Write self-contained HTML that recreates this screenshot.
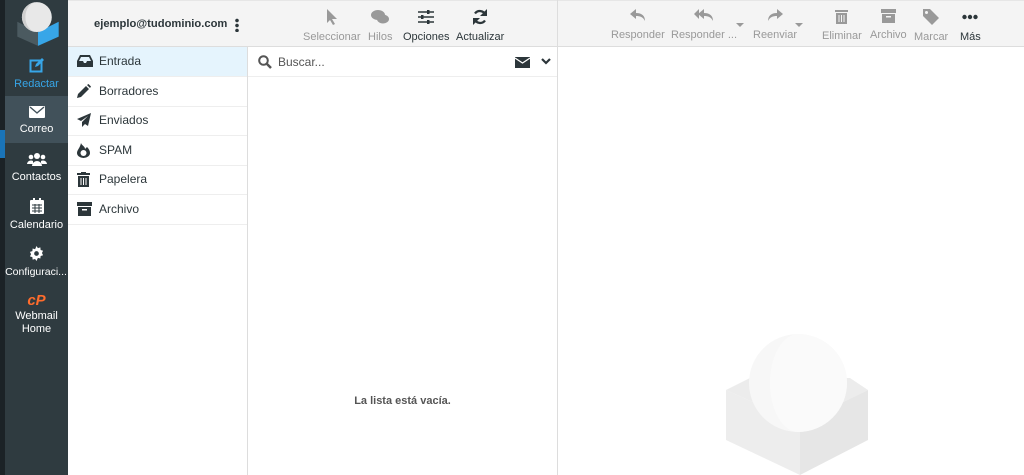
<!DOCTYPE html><html><head><meta charset="utf-8"><style>
*{box-sizing:border-box;margin:0;padding:0}
body{width:1024px;height:475px;overflow:hidden;font-family:"Liberation Sans",sans-serif;background:#fff;position:relative;color:#2c363a}
.abs{position:absolute}
#edge{left:0;top:0;width:5px;height:475px;background:#1b2226}
#side{left:5px;top:0;width:63px;height:475px;background:#2f3b40}
.nav{position:absolute;left:0;width:63px;text-align:center;color:#fff;font-size:11px}
.nav svg{display:block;margin:0 auto 5px}
#fold{left:68px;top:0;width:180px;height:475px;border-right:1px solid #ddd}
.hdr{position:absolute;top:0;height:47px;background:#f4f4f4;border-bottom:1px solid #ddd;border-top:1px solid #e6e6e6}
.frow{position:absolute;left:0;width:179px;height:30px;border-bottom:1px solid #eee;font-size:12px;line-height:29px;padding-left:31px;color:#2c363a}
.frow svg{position:absolute;left:9px;top:7px}
.tb{position:absolute;top:8px;text-align:center;font-size:11px;color:#999}
.tb svg{display:block;margin:0 auto 6px}
.dk{color:#2c363a}
</style></head><body>
<div class="abs" id="edge"></div><div class="abs" style="left:0;top:130px;width:5px;height:28px;background:#1a74b8"></div>
<div class="abs" id="side">
<svg class="abs" style="left:10px;top:2px" width="46" height="44" viewBox="0 0 40 38"><polygon points="2,17 20,26 20,38 2,30" fill="#4b5a60"/><polygon points="20,26 38,17 38,30 20,38" fill="#37a6e8"/><circle cx="19" cy="13" r="13" fill="#e8e8e8"/><path d="M19 0a13 13 0 0 0 0 26a10 13 0 0 1 0-26z" fill="#cfcfcf"/></svg>
<div class="nav" style="top:57px;color:#37a6e8"><svg width="16" height="16" viewBox="0 0 16 16"><rect x="1.5" y="3.5" width="11" height="11" fill="none" stroke="#37a6e8" stroke-width="2"/><path d="M6 10l1-3 6-6 2 2-6 6z" fill="#37a6e8"/></svg>Redactar</div>
<div class="abs" style="left:0;top:96px;width:63px;height:47px;background:#41515a"></div>
<div class="nav" style="top:106px"><svg width="16" height="12" viewBox="0 0 16 12"><rect x="0" y="0" width="16" height="12" rx="1" fill="#fff"/><path d="M1 1l7 6 7-6" fill="none" stroke="#41515a" stroke-width="1.4"/></svg>Correo</div>
<div class="nav" style="top:152px"><svg width="20" height="14" viewBox="0 0 20 14"><circle cx="10" cy="4" r="3" fill="#fff"/><circle cx="4" cy="5" r="2.3" fill="#fff"/><circle cx="16" cy="5" r="2.3" fill="#fff"/><path d="M5 14a5 5 0 0 1 10 0z M0 12a4 4 0 0 1 6-3v3z M20 12a4 4 0 0 0-6-3v3z" fill="#fff"/></svg>Contactos</div>
<div class="nav" style="top:198px"><svg width="14" height="16" viewBox="0 0 14 16"><rect x="0" y="2" width="14" height="14" rx="1" fill="#fff"/><rect x="3" y="0" width="2" height="4" fill="#fff"/><rect x="9" y="0" width="2" height="4" fill="#fff"/><path d="M2 7h10M2 10h10M2 13h10M5 6v9M9 6v9" stroke="#2f3b40" stroke-width="1"/></svg>Calendario</div>
<div class="nav" style="top:246px;font-size:10.5px;white-space:nowrap;margin-left:-3px;width:68px"><svg width="15" height="15" viewBox="0 0 16 16"><path d="M8 0l1.5 2.2 2.6-.7.3 2.7 2.6.8-1.2 2.4 1.2 2.4-2.6.8-.3 2.7-2.6-.7L8 16l-1.5-2.2-2.6.7-.3-2.7-2.6-.8L2.2 8.6 1 6.2l2.6-.8.3-2.7 2.6.7z" fill="#fff"/><circle cx="8" cy="8" r="2.5" fill="#2f3b40"/></svg>Configuraci...</div>
<div class="nav" style="top:292px;line-height:13px"><div style="color:#ff6c2c;font-weight:bold;font-style:italic;font-size:15px;line-height:18px">cP</div>Webmail<br>Home</div>
</div>
<div class="abs" id="fold">
<div class="hdr" style="left:0;width:180px"><div class="abs" style="left:26px;top:17px;font-size:11.2px;font-weight:bold;color:#2c363a;white-space:nowrap">ejemplo@tudominio.com</div><div class="abs" style="left:167px;top:17px;width:4px;height:14px;background:radial-gradient(circle,#2c363a 1.6px,transparent 2px) 0 0/4px 5px"></div></div>
<div class="frow" style="top:47px;background:#e5f4fd"><svg width="16" height="14" viewBox="0 0 16 14"><path d="M0 7l3-6h10l3 6v6H0z" fill="#2c363a"/><path d="M2 7h4l1 2h2l1-2h4l-2-4H4z" fill="#e5f4fd"/></svg>Entrada</div>
<div class="frow" style="top:77px"><svg width="14" height="14" viewBox="0 0 14 14"><path d="M0 14l1-4 8-8 3 3-8 8zM10 1l1.5-1 2.5 2.5-1 1.5z" fill="#2c363a"/></svg>Borradores</div>
<div class="frow" style="top:106px"><svg width="14" height="14" viewBox="0 0 14 14"><path d="M14 0L0 6l4 2 7-5-6 6v5l3-3 3 2z" fill="#2c363a"/></svg>Enviados</div>
<div class="frow" style="top:136px"><svg width="13" height="15" viewBox="0 0 13 15"><path d="M4 0c1 3 4 3 4 6l2-2c2 2 3 4 3 6a6.5 5 0 0 1-13 0c0-3 3-5 4-10z" fill="#2c363a"/><circle cx="6.5" cy="10" r="3" fill="#fff"/></svg>SPAM</div>
<div class="frow" style="top:165px"><svg width="13" height="15" viewBox="0 0 13 15"><rect x="0" y="1" width="13" height="2" fill="#2c363a"/><rect x="4" y="0" width="5" height="2" fill="#2c363a"/><rect x="1" y="4" width="11" height="11" fill="#2c363a"/><path d="M4 6v7M6.5 6v7M9 6v7" stroke="#fff" stroke-width="1"/></svg>Papelera</div>
<div class="frow" style="top:195px"><svg width="15" height="14" viewBox="0 0 15 14"><rect x="0" y="0" width="15" height="4" fill="#2c363a"/><rect x="1" y="5" width="13" height="9" fill="#2c363a"/><rect x="5" y="7" width="5" height="1.5" fill="#fff"/></svg>Archivo</div>
</div>
<div class="abs" style="left:248px;top:0;width:310px;height:475px;border-right:1px solid #ddd">
<div class="hdr" style="left:0;width:309px">
<div class="tb" style="left:55px"><svg width="12" height="16" viewBox="0 0 12 16"><path d="M1 0v14l3-3 3 5 2-1-3-5h5z" fill="#999"/></svg>Seleccionar</div>
<div class="tb" style="left:120px"><svg width="18" height="16" viewBox="0 0 18 16"><ellipse cx="7" cy="6" rx="7" ry="5" fill="#999"/><ellipse cx="12" cy="10" rx="6" ry="4.5" fill="#999"/></svg>Hilos</div>
<div class="tb dk" style="left:155px"><svg width="16" height="16" viewBox="0 0 16 16"><path d="M0 3h16M0 8h16M0 13h16" stroke="#2c363a" stroke-width="1.6"/><rect x="9" y="1" width="2.5" height="4" fill="#2c363a"/><rect x="3" y="6" width="2.5" height="4" fill="#2c363a"/><rect x="9" y="11" width="2.5" height="4" fill="#2c363a"/></svg>Opciones</div>
<div class="tb dk" style="left:208px"><svg width="16" height="16" viewBox="0 0 16 16"><path d="M13.5 6A6 6 0 0 0 3 4.5M2.5 10A6 6 0 0 0 13 11.5" fill="none" stroke="#2c363a" stroke-width="2.3"/><path d="M15 0v7H8zM1 16V9h7z" fill="#2c363a"/></svg>Actualizar</div>
</div>
<div class="abs" style="left:0;top:47px;width:309px;height:30px;border-bottom:1px solid #eee">
<svg class="abs" style="left:10px;top:8px" width="14" height="14" viewBox="0 0 14 14"><circle cx="5.5" cy="5.5" r="4.3" fill="none" stroke="#555" stroke-width="2"/><path d="M8.5 8.5l4.5 4.5" stroke="#555" stroke-width="2.5"/></svg>
<div class="abs" style="left:30px;top:8px;font-size:12px;color:#555">Buscar...</div>
<svg class="abs" style="left:267px;top:10px" width="15" height="11" viewBox="0 0 15 11"><rect width="15" height="11" fill="#2c363a"/><path d="M0 1l7.5 5 7.5-5" fill="none" stroke="#fff" stroke-width="1.2"/></svg>
<svg class="abs" style="left:293px;top:11px" width="10" height="7" viewBox="0 0 10 7"><path d="M1 1l4 4 4-4" fill="none" stroke="#2c363a" stroke-width="2.2"/></svg>
</div>
<div class="abs" style="left:0;top:395px;width:309px;text-align:center;font-size:11px;font-weight:bold;color:#555">La lista está vacía.</div>
</div>
<div class="hdr" style="left:558px;width:466px;color:#999">
<div class="tb" style="left:53px"><svg width="16" height="14" viewBox="0 0 16 14"><path d="M6 0L0 5l6 5V7c4 0 7 1 9 5 0-5-3-8-9-8z" fill="#999"/></svg>Responder</div>
<div class="tb" style="left:113px"><svg width="20" height="14" viewBox="0 0 20 14"><path d="M5 0L0 5l5 5z" fill="#999"/><path d="M10 0L4 5l6 5V7c4 0 7 1 9 5 0-5-3-8-9-8z" fill="#999"/></svg>Responder ...</div>
<div class="abs" style="left:178px;top:22px;border:4px solid transparent;border-top:4px solid #999"></div>
<div class="tb" style="left:195px"><svg width="16" height="14" viewBox="0 0 16 14"><path d="M10 0l6 5-6 5V7c-4 0-7 1-9 5 0-5 3-8 9-8z" fill="#999"/></svg>Reenviar</div>
<div class="abs" style="left:237px;top:22px;border:4px solid transparent;border-top:4px solid #999"></div>
<div class="tb" style="left:264px"><svg width="13" height="15" viewBox="0 0 13 15"><rect x="0" y="1" width="13" height="2" fill="#999"/><rect x="1" y="4" width="11" height="11" fill="#999"/><path d="M4 6v7M6.5 6v7M9 6v7" stroke="#f4f4f4"/></svg>Eliminar</div>
<div class="tb" style="left:312px"><svg width="15" height="14" viewBox="0 0 15 14"><rect width="15" height="4" fill="#999"/><rect x="1" y="5" width="13" height="9" fill="#999"/><rect x="5" y="7" width="5" height="1.5" fill="#f4f4f4"/></svg>Archivo</div>
<div class="tb" style="left:356px"><svg width="16" height="16" viewBox="0 0 16 16"><path d="M0 0h7l9 9-7 7-9-9z" fill="#999"/><circle cx="3.5" cy="3.5" r="1.5" fill="#f4f4f4"/></svg>Marcar</div>
<div class="tb dk" style="left:402px"><svg width="16" height="16" viewBox="0 0 16 16"><circle cx="2.5" cy="8" r="2.2" fill="#2c363a"/><circle cx="8" cy="8" r="2.2" fill="#2c363a"/><circle cx="13.5" cy="8" r="2.2" fill="#2c363a"/></svg>Más</div>
</div>
<svg class="abs" style="left:720px;top:325px" width="160" height="150" viewBox="0 0 160 150"><polygon points="6,65 30,53 130,53 148,65 80,98" fill="#ececec"/><polygon points="6,65 80,98 80,150 6,115" fill="#ededed"/><polygon points="80,98 148,65 148,115 80,150" fill="#e6e6e6"/><circle cx="78" cy="58" r="49" fill="#f7f7f7"/><path d="M78 9a49 49 0 0 1 0 98a28 49 0 0 1 0-98z" fill="#fafafa"/></svg>
</body></html>
